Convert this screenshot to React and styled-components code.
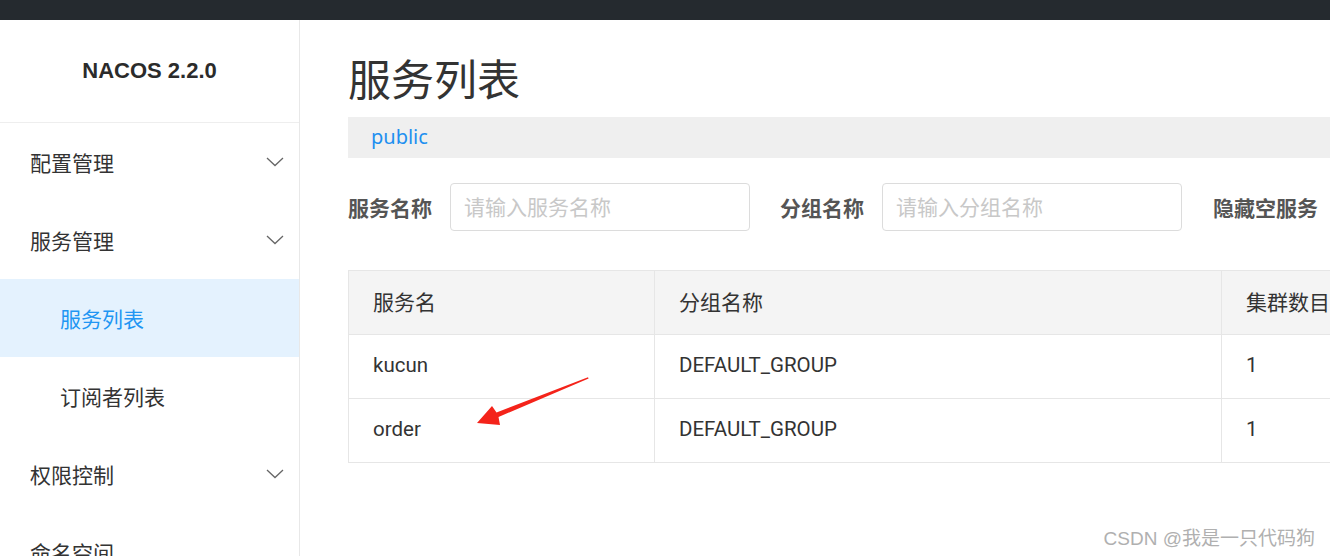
import React from "react";
import styled, { createGlobalStyle } from "styled-components";

const Global = createGlobalStyle`
  html, body { margin: 0; padding: 0; background: #fff; overflow: hidden; }
  body { font-family: Roboto, "Noto Sans CJK SC", sans-serif; color: #333; }
`;

const Page = styled.div`
  position: relative;
  width: 1330px;
  height: 556px;
  overflow: hidden;
  display: flex;
  flex-direction: column;
`;

const TopBar = styled.div`
  height: 20px;
  flex: none;
  background: #252a2f;
`;

const Body = styled.div`
  flex: 1;
  display: flex;
  min-height: 0;
`;

const Sidebar = styled.aside`
  width: 299px;
  flex: none;
  border-right: 1px solid #e8e8e8;
  display: flex;
  flex-direction: column;
`;

const Logo = styled.div`
  height: 102px;
  flex: none;
  border-bottom: 1px solid #eeeeee;
  display: flex;
  align-items: center;
  justify-content: center;
  font-family: "Liberation Sans", Arial, sans-serif;
  font-weight: 700;
  font-size: 22px;
  color: #2b2b2b;
`;

const MenuItem = styled.div`
  height: 78px;
  flex: none;
  display: flex;
  align-items: center;
  justify-content: space-between;
  padding-left: ${(p) => (p.$sub ? 60 : 30)}px;
  padding-right: 15px;
  font-family: "Noto Sans CJK SC", sans-serif;
  font-size: 21px;
  color: ${(p) => (p.$active ? "#2196f3" : "#333")};
  background: ${(p) => (p.$active ? "#e4f2fe" : "transparent")};
`;

const Chevron = () => (
  <svg width="18" height="10" viewBox="0 0 18 10">
    <polyline points="1,1 9,8.5 17,1" fill="none" stroke="#666" strokeWidth="1.3" />
  </svg>
);

const Main = styled.main`
  flex: 1;
  min-width: 0;
  padding-left: 48px;
  overflow: hidden;
`;

const Title = styled.h1`
  margin: 27px 0 0;
  font-family: "Noto Sans CJK SC", sans-serif;
  font-weight: 400;
  font-size: 43px;
  line-height: 60px;
  color: #333;
`;

const NamespaceBar = styled.div`
  margin-top: 10px;
  height: 41px;
  background: #efefef;
  display: flex;
  align-items: center;
  padding-left: 23px;
  padding-bottom: 2px;
  box-sizing: border-box;
  font-family: "Noto Sans", "Noto Sans CJK SC", sans-serif;
  font-size: 20px;
  color: #1e8ff0;
`;

const FilterRow = styled.div`
  margin-top: 25px;
  display: flex;
  align-items: center;
  white-space: nowrap;
`;

const Label = styled.span`
  flex: none;
  font-family: "Noto Sans CJK SC", sans-serif;
  font-weight: 700;
  font-size: 21px;
  line-height: 44px;
  color: #555;
  margin-right: 18px;
  margin-left: ${(p) => p.$gap || 0}px;
`;

const Input = styled.input`
  flex: none;
  width: 300px;
  height: 48px;
  box-sizing: border-box;
  border: 1px solid #dcdcdc;
  border-radius: 4px;
  padding: 0 0 3px 13px;
  font-family: "Noto Sans CJK SC", sans-serif;
  font-size: 21px;
  outline: none;
  &::placeholder { color: #c8c8c8; }
`;

const Table = styled.table`
  margin-top: 39px;
  border-collapse: collapse;
  table-layout: fixed;
  width: 1400px;
`;

const Th = styled.th`
  height: 60px;
  padding: 0 0 3px 24px;
  text-align: left;
  font-weight: 400;
  background: #f4f4f4;
  border: 1px solid #e6e6e6;
  font-family: "Noto Sans CJK SC", sans-serif;
  font-size: 21px;
  color: #333;
  white-space: nowrap;
  overflow: hidden;
`;

const Td = styled.td`
  height: 60px;
  padding: 0 0 3px 24px;
  border: 1px solid #e6e6e6;
  font-family: Roboto, "Noto Sans CJK SC", sans-serif;
  font-size: 20.5px;
  color: #333;
  white-space: nowrap;
`;

const Arrow = styled.svg`
  position: absolute;
  left: 470px;
  top: 370px;
  pointer-events: none;
`;

const Watermark = styled.div`
  position: absolute;
  right: 15px;
  bottom: 6px;
  font-family: "Liberation Sans", "Noto Sans CJK SC", sans-serif;
  font-size: 19px;
  color: #b0b0b0;
  text-shadow: 0 0 1px #fff;
`;

const rows = [
  { name: "kucun", group: "DEFAULT_GROUP", count: 1 },
  { name: "order", group: "DEFAULT_GROUP", count: 1 },
];

export default function App() {
  return (
    <>
      <Global />
      <Page>
        <TopBar />
        <Body>
          <Sidebar>
            <Logo>NACOS 2.2.0</Logo>
            <MenuItem>配置管理<Chevron /></MenuItem>
            <MenuItem>服务管理<Chevron /></MenuItem>
            <MenuItem $sub $active>服务列表</MenuItem>
            <MenuItem $sub>订阅者列表</MenuItem>
            <MenuItem>权限控制<Chevron /></MenuItem>
            <MenuItem>命名空间</MenuItem>
          </Sidebar>
          <Main>
            <Title>服务列表</Title>
            <NamespaceBar>public</NamespaceBar>
            <FilterRow>
              <Label>服务名称</Label>
              <Input placeholder="请输入服务名称" />
              <Label $gap={30}>分组名称</Label>
              <Input placeholder="请输入分组名称" />
              <Label $gap={31}>隐藏空服务</Label>
            </FilterRow>
            <Table>
              <colgroup>
                <col style={{ width: 306 }} />
                <col style={{ width: 567 }} />
                <col style={{ width: 300 }} />
                <col />
              </colgroup>
              <thead>
                <tr>
                  <Th>服务名</Th>
                  <Th>分组名称</Th>
                  <Th>集群数目</Th>
                  <Th>实例数</Th>
                </tr>
              </thead>
              <tbody>
                {rows.map((r) => (
                  <tr key={r.name}>
                    <Td>{r.name}</Td>
                    <Td>{r.group}</Td>
                    <Td>{r.count}</Td>
                    <Td>1</Td>
                  </tr>
                ))}
              </tbody>
            </Table>
          </Main>
        </Body>
        <Arrow width="125" height="60" viewBox="0 0 125 60">
          <polygon
            points="7,53 22,36 26.5,42.5 118,7.2 118.6,8.6 28.5,47 30,55"
            fill="#f4231a"
          />
        </Arrow>
        <Watermark>CSDN @我是一只代码狗</Watermark>
      </Page>
    </>
  );
}
